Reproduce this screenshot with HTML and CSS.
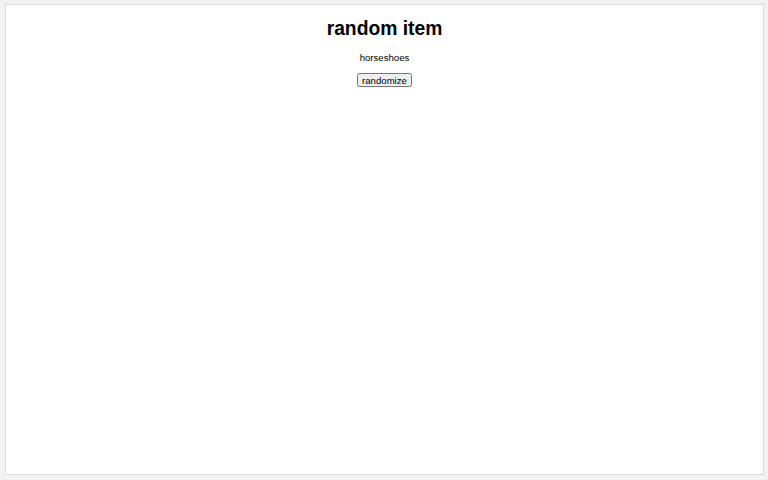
FILE: index.html
```html
<!DOCTYPE html>
<html>
<head>
<meta charset="utf-8">
<link rel="stylesheet" href="styles.css">
</head>
<body>
<main class="panel">
  <h1 class="title">random item</h1>
  <p class="item">horseshoes</p>
  <button class="btn">randomize</button>
</main>
</body>
</html>
```
FILE: styles.css
```css
html, body {
  margin: 0;
  height: 100%;
}
body {
  background: #f2f2f2;
  padding: 4px 4px 5px 5px;
  box-sizing: border-box;
  font-family: "Liberation Sans", Arial, sans-serif;
}
.panel {
  height: 100%;
  box-sizing: border-box;
  background: #fff;
  border: 1px solid #dcdcdc;
  display: flex;
  flex-direction: column;
  align-items: center;
}
.title {
  margin: 13px 0 0;
  font-size: 19.3px;
  font-weight: bold;
  color: #000;
  line-height: 22px;
}
.item {
  margin: 12px 0 0;
  font-size: 9.6px;
  line-height: 11px;
  color: #000;
}
.btn {
  margin-top: 10px;
  font-family: "Liberation Sans", Arial, sans-serif;
  font-size: 9.6px;
  padding: 0 3px;
  line-height: 11px;
  height: 14px;
}
```
